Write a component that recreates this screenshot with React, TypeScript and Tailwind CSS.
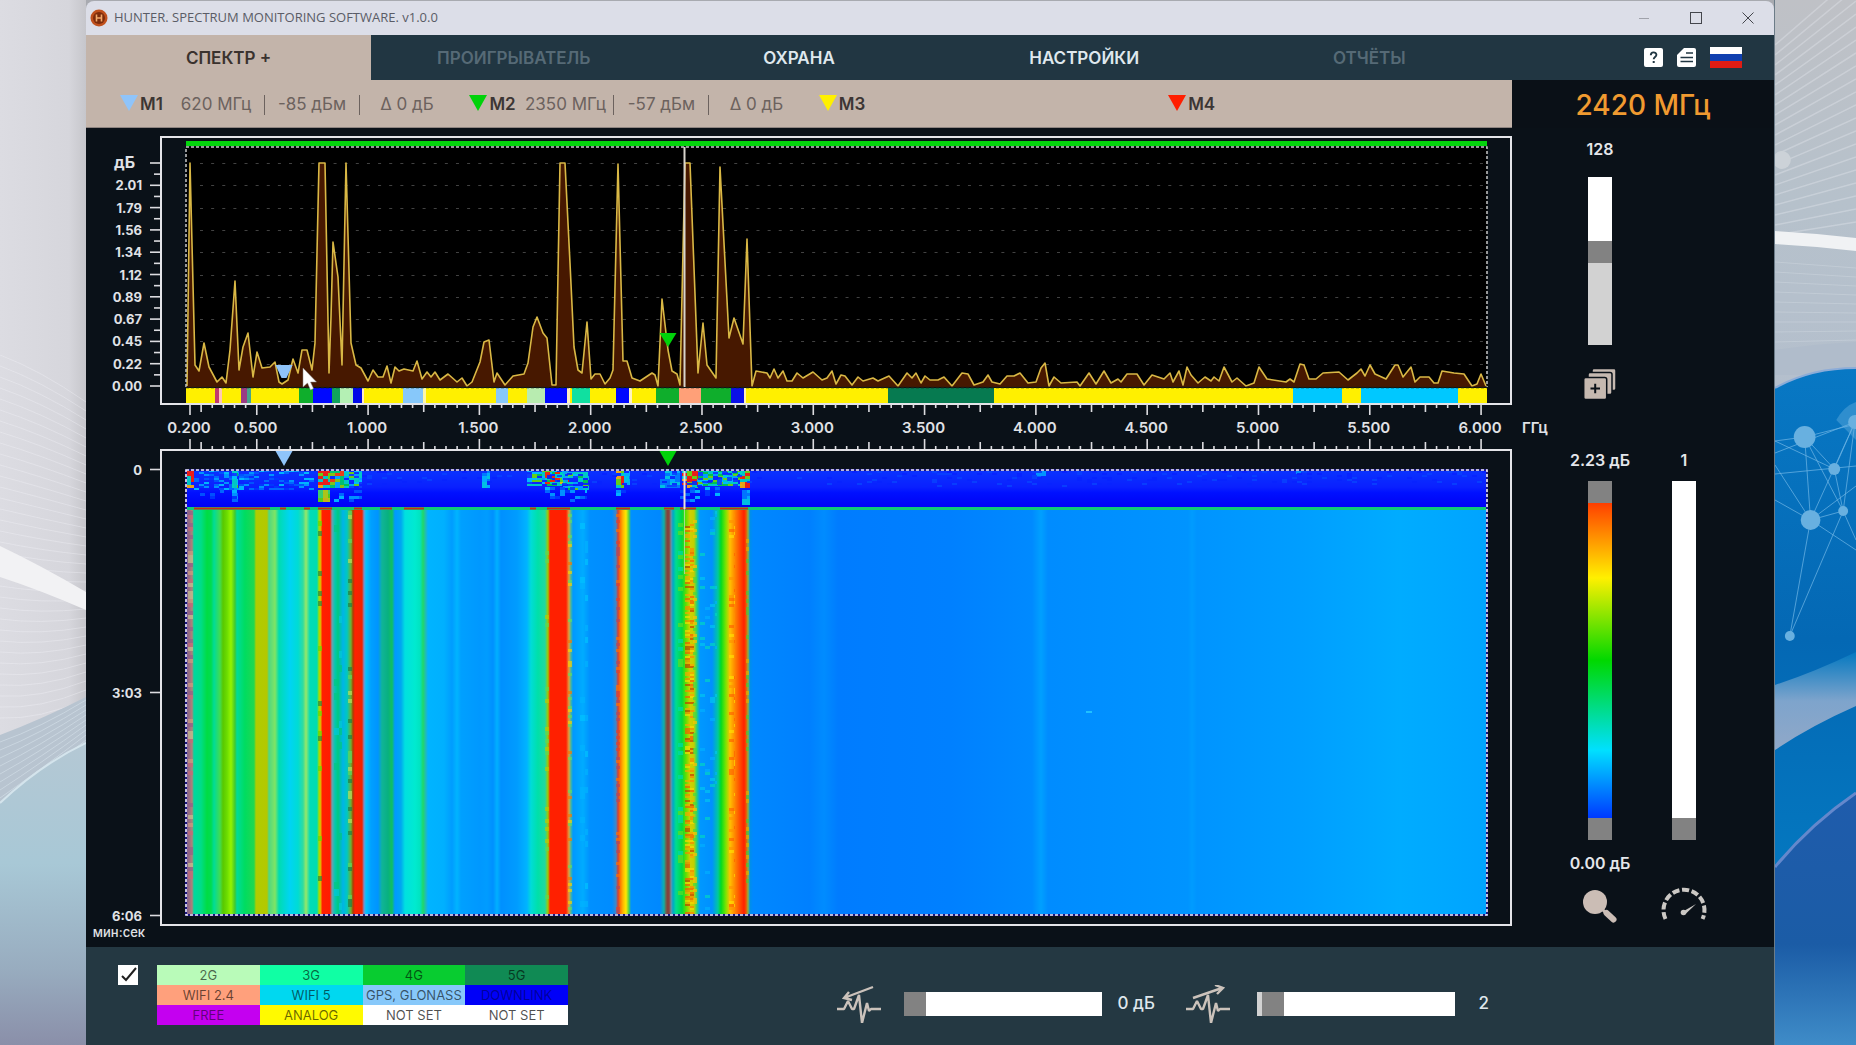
import { useState } from 'react';
import type { ReactNode } from 'react';

const tabs = [
  { id: 'spectrum', title: 'СПЕКТР +', disabled: false },
  { id: 'player', title: 'ПРОИГРЫВАТЕЛЬ', disabled: true },
  { id: 'guard', title: 'ОХРАНА', disabled: false },
  { id: 'settings', title: 'НАСТРОЙКИ', disabled: false },
  { id: 'reports', title: 'ОТЧЁТЫ', disabled: true },
];

const markers = [
  { name: 'M1', color: '#8fc4fa', freq: '620 МГц', level: '-85 дБм', delta: 'Δ 0 дБ' },
  { name: 'M2', color: '#00d20a', freq: '2350 МГц', level: '-57 дБм', delta: 'Δ 0 дБ' },
  { name: 'M3', color: '#fff000', freq: '', level: '', delta: '' },
  { name: 'M4', color: '#ff1e00', freq: '', level: '', delta: '' },
];

const legend = [
  { name: '2G', style: 'bg-[#b9fbb9] text-black/60' },
  { name: '3G', style: 'bg-[#10ffa4] text-black/60' },
  { name: '4G', style: 'bg-[#08cc30] text-black/60' },
  { name: '5G', style: 'bg-[#108a54] text-black/60' },
  { name: 'WIFI 2.4', style: 'bg-[#ffa07c] text-black/60' },
  { name: 'WIFI 5', style: 'bg-[#00d8f0] text-black/60' },
  { name: 'GPS, GLONASS', style: 'bg-[#87c8fa] text-black/60' },
  { name: 'DOWNLINK', style: 'bg-[#0000f8] text-black/40' },
  { name: 'FREE', style: 'bg-[#c400f0] text-black/50' },
  { name: 'ANALOG', style: 'bg-[#fffa00] text-black/60' },
  { name: 'NOT SET', style: 'bg-white text-black/70' },
  { name: 'NOT SET', style: 'bg-white text-black/70' },
];

// spectrum trace, plot coordinates
const trace =
  '187,386 190,163 195,365 199,371 204,343 209,367 217,382 222,377 226,383 230,350 235,281 239,370 243,347 248,333 253,377 257,352 262,368 270,367 275,362 279,382 282,384 288,380 293,359 298,373 302,350 307,350 312,370 315,343 319,163 325,163 329,373 331,317 333,242 338,277 342,365 346,163 351,343 356,365 361,368 368,381 373,370 378,377 383,377 387,366 391,383 395,367 399,371 404,369 413,371 417,361 422,379 427,372 431,377 435,372 440,380 448,374 457,382 462,378 467,386 472,382 480,362 484,342 489,340 494,382 497,373 505,385 513,376 524,374 528,363 533,327 537,317 543,333 547,338 552,385 556,385 560,163 565,163 570,263 574,347 578,370 582,373 587,322 591,379 595,374 600,374 605,384 610,378 613,370 618,164 623,361 627,361 632,378 640,381 652,373 655,375 658,386 662,299 668,350 672,371 677,374 680,385 685,163 690,163 698,373 703,323 707,365 716,378 720,167 729,338 734,318 743,344 747,239 752,386 756,371 767,373 770,378 774,369 778,378 783,371 787,381 792,381 797,373 803,378 813,372 822,380 827,378 832,371 836,384 841,375 845,376 852,385 858,377 863,381 873,378 878,381 889,376 898,386 907,373 912,378 916,373 921,383 925,376 930,380 938,380 944,377 952,386 962,373 968,374 974,385 983,382 988,375 992,382 1000,384 1007,376 1014,376 1020,373 1028,383 1036,382 1041,368 1045,363 1049,386 1054,377 1061,383 1077,382 1080,386 1089,373 1096,384 1104,371 1111,383 1118,379 1121,382 1127,374 1137,374 1144,385 1152,375 1164,379 1170,373 1173,382 1179,371 1183,385 1187,367 1191,375 1198,383 1205,377 1211,381 1214,377 1219,381 1224,367 1232,382 1237,378 1246,386 1254,383 1259,367 1267,379 1286,382 1290,379 1294,382 1300,364 1304,365 1309,379 1316,379 1323,373 1339,372 1348,380 1357,373 1361,369 1365,376 1370,365 1375,374 1386,379 1395,365 1398,365 1403,377 1411,367 1415,382 1420,377 1429,377 1434,383 1438,383 1442,371 1454,373 1464,374 1472,386 1477,384 1481,374 1486,386';

const bands: [number, number, string][] = [
  [215, 219, '#c03a6e'],
  [219, 222, '#ffc8b4'],
  [241, 247, '#9a3c84'],
  [247, 251, '#48a48c'],
  [299, 313, '#0fae2c'],
  [313, 332, '#0008ff'],
  [332, 340, '#10a35c'],
  [340, 353, '#b4f0b4'],
  [353, 362, '#0008e8'],
  [362, 364, '#ffe9c8'],
  [403, 423, '#87c8fa'],
  [423, 426, '#fff7a8'],
  [496, 508, '#87c8fa'],
  [527, 545, '#b8ecb0'],
  [545, 567, '#0008ff'],
  [567, 570, '#fff0c0'],
  [572, 590, '#10e0a0'],
  [616, 629, '#0008ff'],
  [629, 632, '#fff3c0'],
  [656, 679, '#0fae2c'],
  [679, 701, '#ffa078'],
  [701, 731, '#0fae2c'],
  [731, 744, '#0a10e8'],
  [744, 746, '#fff0b0'],
  [888, 994, '#067a50'],
  [1293, 1342, '#00c8ff'],
  [1361, 1458, '#00c8ff'],
];

const waterfall: [number, string][] = [
  [186, '#7a5c90'], [192, '#b08078'], [194, '#00d8a0'], [201, '#00dc88'], [207, '#00dc44'], [211, '#00dc50'],
  [214, '#00dc98'], [220, '#40dc50'], [223, '#58c800'], [227, '#6cdc00'], [231, '#94f400'], [235, '#40c830'],
  [237, '#00dc98'], [245, '#00dc60'], [254, '#20d850'], [256, '#b0cc00'], [267, '#b4c800'], [269, '#50d880'],
  [275, '#80e464'], [279, '#00dcb0'], [290, '#00d4f4'], [298, '#00dcd4'], [303, '#30dca0'], [306, '#98e868'],
  [310, '#00dcb8'], [317, '#00dcb0'], [319, '#a0e000'], [321, '#f0a800'], [322, '#ff2000'], [330, '#ff1c00'],
  [332, '#6ca0b0'], [335, '#00c8b0'], [338, '#00c880'], [343, '#00b4e8'], [347, '#00c8c0'], [351, '#70b030'],
  [353, '#a84000'], [355, '#ff2000'], [362, '#f02400'], [364, '#7890d0'], [366, '#00c4ff'], [371, '#00a0ff'],
  [378, '#0094ff'], [382, '#10b498'], [388, '#08b080'], [392, '#10c060'], [395, '#0098ff'], [401, '#00a8f0'],
  [405, '#00e0e0'], [415, '#00ead0'], [420, '#00e4c0'], [423, '#20d868'], [426, '#20b8c0'], [428, '#00b4ff'],
  [444, '#00b0ff'], [452, '#009cff'], [457, '#00b4ff'], [461, '#00a0ff'], [480, '#0098ff'], [487, '#009cff'],
  [493, '#0090ff'], [497, '#00b0ff'], [501, '#0090ff'], [517, '#009cff'], [527, '#00b4ff'], [531, '#00dcd8'],
  [538, '#00e0a8'], [545, '#20d8a0'], [548, '#a0c800'], [550, '#ff2000'], [566, '#ff2000'], [569, '#e0a040'],
  [571, '#40b8a0'], [573, '#0098ff'], [583, '#00acff'], [590, '#0090ff'], [612, '#008cff'], [616, '#4088c8'],
  [618, '#d04038'], [620, '#ff7000'], [623, '#ffb800'], [626, '#ffe800'], [629, '#50d048'], [631, '#0090ff'],
  [660, '#0088ff'], [664, '#10b0a8'], [666, '#6c6450'], [668, '#883838'], [670, '#806058'], [671, '#6c90a8'],
  [673, '#00a8c8'], [676, '#00dc90'], [682, '#00d840'], [686, '#60e000'], [690, '#d0d000'], [694, '#c0d000'],
  [697, '#20d080'], [700, '#0098ff'], [712, '#0090ff'], [718, '#00c8a0'], [721, '#00dc20'], [726, '#80e400'],
  [730, '#ffc000'], [736, '#ff7800'], [741, '#ff4000'], [744, '#ff2000'], [746, '#f05000'], [748, '#90b040'],
  [750, '#0090e8'], [753, '#0088ff'], [810, '#0080ff'], [824, '#008cff'], [838, '#007cff'], [950, '#0080ff'],
  [1032, '#008aff'], [1041, '#00a0ff'], [1048, '#008cff'], [1188, '#0094ff'], [1192, '#009cff'], [1197, '#0094ff'],
  [1300, '#009eff'], [1400, '#00acff'], [1487, '#00a4ff'],
];

const HOT = ['#ff1e00', '#ff1e00', '#ff1e00', '#ffb000', '#70e000', '#00d8c0'];
const WARM = ['#00d040', '#70e000', '#00d8c0', '#00a8ff', '#00d8c0', '#00c8ff', '#1040ff'];
const COOL = ['#00c4ff', '#00a0ff', '#0070ff', '#0058ff', '#0038ff'];
const CYAN = ['#00b8ff', '#00d0e0', '#0080ff'];

// noisy areas of the waterfall: x, width, y, height, cell height, fill probability, palette
const noisy: [number, number, number, number, number, number, string[]][] = [
  [186, 8, 470, 20, 3, 0.9, HOT],
  [194, 120, 470, 20, 2, 0.5, COOL],
  [232, 6, 470, 20, 3, 0.9, WARM],
  [318, 12, 470, 20, 3, 1, HOT],
  [318, 12, 490, 14, 4, 1, ['#c0d800', '#40e060', '#e0c000', '#60e000']],
  [330, 14, 470, 19, 3, 0.95, ['#ff4000', '#00d060', '#90d000', '#00b0ff']],
  [344, 18, 470, 18, 2, 0.8, WARM],
  [190, 34, 490, 13, 3, 0.25, COOL],
  [232, 6, 490, 13, 3, 0.8, COOL],
  [334, 28, 490, 13, 3, 0.4, COOL],
  [482, 8, 470, 20, 3, 0.8, CYAN],
  [527, 36, 470, 17, 2, 0.85, WARM],
  [545, 24, 472, 12, 2, 0.5, HOT],
  [563, 26, 470, 20, 2, 0.7, WARM],
  [545, 42, 487, 17, 3, 0.4, COOL],
  [616, 8, 470, 20, 3, 0.9, HOT],
  [624, 6, 470, 20, 3, 0.7, CYAN],
  [616, 12, 490, 12, 3, 0.5, COOL],
  [660, 20, 470, 20, 3, 0.8, CYAN],
  [682, 16, 470, 18, 3, 0.95, HOT],
  [698, 44, 470, 17, 2, 0.85, WARM],
  [740, 10, 470, 20, 3, 0.9, HOT],
  [680, 40, 487, 15, 3, 0.5, COOL],
  [742, 8, 490, 16, 3, 0.9, CYAN],
  [1036, 10, 470, 9, 3, 0.8, ['#00a0ff', '#0060ff']],
  [1296, 10, 470, 4, 2, 0.8, ['#0090ff', '#0060ff']],
  [362, 1124, 471, 16, 2, 0.12, ['#0840ff', '#0824ff']],
  [188, 5, 511, 403, 4, 0.5, ['#c86878', '#d0a080', '#906088', '#c8c890']],
  [318, 4, 511, 403, 5, 0.12, ['#208040', '#60d800']],
  [348, 4, 511, 403, 4, 0.25, ['#60d860', '#207840', '#c0e060']],
  [334, 8, 511, 403, 7, 0.12, ['#00c880', '#00c8e0']],
  [568, 4, 511, 403, 3, 0.25, ['#ffd000', '#60e060', '#ff7000']],
  [545, 4, 511, 403, 4, 0.25, ['#c0c800', '#60d850']],
  [580, 8, 511, 403, 6, 0.2, ['#00c4ff', '#00b4ff']],
  [616, 4, 511, 403, 3, 0.4, ['#e04030', '#ff7000', '#b04860']],
  [685, 9, 524, 390, 2, 0.55, ['#ff5000', '#c83000', '#ffa000', '#ffd800', '#ff8000']],
  [693, 4, 511, 403, 3, 0.35, ['#ffc000', '#40d840']],
  [678, 5, 511, 403, 4, 0.25, ['#00d8b0', '#60e020']],
  [700, 17, 511, 403, 3, 0.08, ['#00c8f0', '#00b0ff', '#00d8c0']],
  [729, 6, 511, 403, 3, 0.3, ['#ff9000', '#ffe000', '#ff6000']],
  [746, 3, 511, 403, 4, 0.3, ['#e0b000', '#40c840']],
];

function random(seed: number) {
  let s = seed;
  return () => {
    s = (s * 1664525 + 1013904223) % 4294967296;
    return s / 4294967296;
  };
}

function noiseCells() {
  const rnd = random(42);
  const cells: { x: number; y: number; w: number; h: number; c: string }[] = [];
  noisy.forEach(([x, w, y, h, step, chance, palette]) => {
    for (let cy = y; cy + step <= y + h; cy += step) {
      for (let cx = x; cx < x + w; cx += 5) {
        if (rnd() > chance) continue;
        cells.push({ x: cx, y: cy, w: Math.min(5, x + w - cx), h: step, c: palette[Math.floor(rnd() * palette.length)] });
      }
    }
  });
  return cells;
}

const cells = noiseCells();

const freqX = (ghz: number) => 190 + (ghz - 0.2) * 222.6;
const freqTicks = Array.from({ length: 117 }, (_, i) => 4 + i);
const freqLabels = [0.2, 0.5, 1, 1.5, 2, 2.5, 3, 3.5, 4, 4.5, 5, 5.5, 6];
const levelLabels = ['дБ', '2.01', '1.79', '1.56', '1.34', '1.12', '0.89', '0.67', '0.45', '0.22', '0.00'];
const levelY = (i: number) => 163 + i * 22.3;

function tickLength(i: number) {
  if (i === 4 || i % 10 === 0) return 11;
  return i % 5 === 0 ? 8 : 4;
}

function Pin({ x, y, color }: { x: number; y: number; color: string }) {
  return <path d={`M${x - 8.5} ${y}h17l-8.5 15z`} fill={color} />;
}

function Charts() {
  return (
    <svg viewBox="86 128 1426 819" className="block w-full overflow-visible" role="img" aria-label="Спектр и водопад">
      <defs>
        <linearGradient id="waterfall" gradientUnits="userSpaceOnUse" x1="186" y1="0" x2="1487" y2="0">
          {waterfall.map(([x, color]) => (
            <stop key={x} offset={(x - 186) / 1301} stopColor={color} />
          ))}
        </linearGradient>
        <linearGradient id="recent" x1="0" y1="0" x2="0" y2="1">
          <stop offset="0" stopColor="#0a34ff" />
          <stop offset="0.45" stopColor="#0a20ff" />
          <stop offset="0.6" stopColor="#0010ff" />
          <stop offset="1" stopColor="#0000f4" />
        </linearGradient>
      </defs>

      {/* Spectrum */}
      <rect x="161" y="137" width="1350" height="267" fill="none" stroke="#e4e4e8" strokeWidth="2" />
      <rect x="186" y="141" width="1301" height="5" fill="#04d40c" />
      <rect x="186" y="147" width="1301" height="240" fill="#000" />
      {levelLabels.slice(0, 10).map((label, i) => (
        <path
          key={label}
          d={`M200 ${Math.round(levelY(i)) + 0.5}H1486`}
          stroke="#424242"
          strokeWidth="1"
          strokeDasharray="3 8.13"
        />
      ))}
      <polygon points={`187,387 ${trace} 1486,387`} fill="#471800" />
      <polyline points={trace} fill="none" stroke="#d9b845" strokeWidth="1.6" strokeLinejoin="round" />
      <path d="M684.5 147V387" stroke="#d8d4cc" strokeWidth="2" />
      <path d="M186 387V147H1487V387" fill="none" stroke="#c8c8c8" strokeWidth="1.5" strokeDasharray="3 2" />
      <rect x="186" y="388" width="1301" height="15" fill="#fff000" />
      {bands.map(([from, to, color]) => (
        <rect key={from} x={from} y="388" width={to - from} height="15" fill={color} />
      ))}
      <path d="M186 387.5H1487" stroke="#1c1c10" strokeWidth="1.5" strokeDasharray="3 2" />
      <path d="M275.5 365h17l-6 13h-5z" fill="#8fc4fa" />
      <path d="M659.5 333h17l-8.5 14z" fill="#00d20a" />

      {levelLabels.map((label, i) => (
        <g key={label}>
          <path d={`M150 ${levelY(i)}h10`} stroke="#dcdce0" strokeWidth="1.6" />
          {i < 10 && <path d={`M154 ${levelY(i) + 11.15}h6`} stroke="#dcdce0" strokeWidth="1.6" />}
          <text
            x={i === 0 ? 135 : 142}
            y={levelY(i) + 5}
            textAnchor="end"
            className={i === 0 ? 'fill-[#e0e2e6] text-[16px] font-bold' : 'fill-[#e0e2e6] text-[13px] font-bold'}
          >
            {label}
          </text>
        </g>
      ))}

      {/* Frequency axis */}
      {freqTicks.map(i => (
        <path
          key={i}
          d={`M${freqX(i / 20)} 404v${tickLength(i)}M${freqX(i / 20)} 450v-${tickLength(i)}`}
          stroke="#dcdce0"
          strokeWidth="1.6"
        />
      ))}
      {freqLabels.map(f => (
        <text key={f} x={freqX(f) - 1} y="433" textAnchor="middle" className="fill-[#e0e2e6] text-[15px] font-semibold">
          {f.toFixed(3)}
        </text>
      ))}
      <text x="1522" y="433" className="fill-[#e0e2e6] text-[15px] font-semibold">
        ГГц
      </text>

      {/* Waterfall */}
      <rect x="161" y="450" width="1350" height="475" fill="none" stroke="#e4e4e8" strokeWidth="2" />
      <rect x="186" y="470" width="1301" height="38" fill="url(#recent)" />
      <rect x="186" y="510" width="1301" height="405" fill="url(#waterfall)" />
      {cells.map((cell, i) => (
        <rect
          key={i}
          x={cell.x}
          y={cell.y}
          width={cell.w}
          height={cell.h}
          fill={cell.c}
          opacity={cell.y < 508 ? 0.9 : 0.65}
        />
      ))}
      <path d="M186 508.5H1487" stroke="#10c878" strokeWidth="3" />
      <path
        d="M194 508.5H270M280 508.5h6M304 508.5h6M318 508.5H332M354 508.5H362M380 508.5h12M404 508.5H424M530 508.5h6M547 508.5H570M616 508.5h14M664 508.5h10M680 508.5H696M720 508.5H748"
        stroke="#c43018"
        strokeWidth="2"
      />
      <path d="M684.5 470V509" stroke="#e8e0d8" strokeWidth="2" />
      <path d="M684.5 509V574" stroke="#e8e0d8" strokeOpacity="0.6" />
      <path d="M1086 712h6" stroke="#20c0ff" strokeWidth="2" />
      <rect x="186" y="470" width="1301" height="445" fill="none" stroke="#1a1480" strokeWidth="2" />
      <rect x="186" y="470" width="1301" height="445" fill="none" stroke="#f0eef8" strokeWidth="1.6" strokeDasharray="3 2" />
      <Pin x={284} y={451} color="#8fc4fa" />
      <Pin x={668} y={451} color="#00d20a" />
      {['0', '3:03', '6:06'].map((label, i) => (
        <g key={label}>
          <path d={`M150 ${469.5 + i * 223}h10`} stroke="#dcdce0" strokeWidth="1.6" />
          <text x="142" y={474.5 + i * 223} textAnchor="end" className="fill-[#e0e2e6] text-[13px] font-bold">
            {label}
          </text>
        </g>
      ))}
      <text x="145" y="937" textAnchor="end" className="fill-[#e0e2e6] text-[13px] font-medium">
        мин:сек
      </text>

      {/* Pointer */}
      <path d="M303 368v19l4.5-4 3 7 3-1.5-3-6.500h6z" fill="#fff" stroke="#888" strokeWidth="0.5" />
    </svg>
  );
}

function LeftWallpaper() {
  return (
    <svg viewBox="0 0 86 1045" preserveAspectRatio="none" className="absolute inset-0 h-full w-full" aria-hidden="true">
      <defs>
        <linearGradient id="lTop" x1="0" y1="0" x2="1" y2="0">
          <stop offset="0" stopColor="#dcdce2" />
          <stop offset="0.8" stopColor="#d6d6dc" />
          <stop offset="1" stopColor="#c6c6cb" />
        </linearGradient>
        <linearGradient id="lBottom" x1="0" y1="0" x2="0" y2="1">
          <stop offset="0" stopColor="#b4c8d4" />
          <stop offset="0.4" stopColor="#a8c8d6" />
          <stop offset="0.75" stopColor="#98acbf" />
          <stop offset="1" stopColor="#8a8fa9" />
        </linearGradient>
      </defs>
      <rect width="86" height="1045" fill="url(#lTop)" />
      {Array.from({ length: 34 }, (_, i) => (
        <path
          key={i}
          d={`M0 ${355 + i * 11}Q40 ${370 + i * 10.6} 86 ${402 + i * 9}`}
          stroke="#f4f4f8"
          strokeOpacity="0.35"
          fill="none"
        />
      ))}
      <path d="M0 546Q40 565 86 592V610Q40 590 0 577z" fill="#f2f2f4" />
      <path d="M0 735Q40 720 86 697V1045H0z" fill="#b8c4d0" />
      {Array.from({ length: 9 }, (_, i) => (
        <path key={i} d={`M0 ${742 + i * 8}Q40 ${728 + i * 6} 86 ${700 + i * 5}`} stroke="#dce8f0" strokeOpacity="0.5" fill="none" />
      ))}
      <path d="M0 803Q40 765 86 743V1045H0z" fill="url(#lBottom)" />
      <path d="M0 803Q40 765 86 743" stroke="#d4e4ec" strokeWidth="2" fill="none" />
    </svg>
  );
}

const nodes = [
  [30, 437, 11],
  [60, 469, 6],
  [69, 511, 5],
  [36, 520, 10],
  [15, 636, 5],
  [81, 422, 7],
];

function RightWallpaper() {
  return (
    <svg viewBox="0 0 82 1045" preserveAspectRatio="none" className="absolute inset-0 h-full w-full" aria-hidden="true">
      <defs>
        <linearGradient id="rTop" x1="0" y1="0" x2="0" y2="1">
          <stop offset="0" stopColor="#bfc1c6" />
          <stop offset="0.5" stopColor="#b6c1cb" />
          <stop offset="1" stopColor="#b4bfcd" />
        </linearGradient>
        <linearGradient id="rBlue" x1="0" y1="0" x2="0" y2="1">
          <stop offset="0" stopColor="#0878c4" />
          <stop offset="0.4" stopColor="#0468b4" />
          <stop offset="0.75" stopColor="#0478c0" />
          <stop offset="1" stopColor="#2c88c8" />
        </linearGradient>
        <linearGradient id="rDeep" x1="0" y1="0" x2="0" y2="1">
          <stop offset="0" stopColor="#1f5cac" />
          <stop offset="0.6" stopColor="#1b5ca6" />
          <stop offset="1" stopColor="#3f8cc8" />
        </linearGradient>
        <linearGradient id="rBand" x1="0" y1="0" x2="0" y2="1">
          <stop offset="0" stopColor="#0478c0" />
          <stop offset="0.5" stopColor="#7ea4cc" />
          <stop offset="1" stopColor="#90a8c8" />
        </linearGradient>
      </defs>
      <rect width="82" height="400" fill="url(#rTop)" />
      {Array.from({ length: 20 }, (_, i) => (
        <path key={i} d={`M0 ${45 + i * 10}L82 ${-25 + i * 13}`} stroke="#e8ecf0" strokeOpacity="0.35" strokeWidth="1.5" />
      ))}
      <circle cx="7" cy="160" r="9" fill="#ccd2d8" />
      <path d="M0 231Q40 233 82 238V251Q40 246 0 244z" fill="#f0f2f4" />
      {Array.from({ length: 9 }, (_, i) => (
        <path key={i} d={`M0 ${262 + i * 10}L82 ${268 + i * 9}`} stroke="#d4dce4" strokeOpacity="0.4" />
      ))}
      <path d="M0 350Q40 344 82 342V375H0z" fill="#b0bccb" />
      <path d="M0 388Q36 368 82 368V1045H0z" fill="url(#rBlue)" />
      <path d="M0 388Q36 368 82 368" stroke="#8cacd8" strokeWidth="2" fill="none" />
      <path d="M62 420Q70 406 82 402V440z" fill="#6cb4e0" opacity="0.4" />
      <path
        d="M0 441L30 437 82 424M0 453L81 422M30 437L60 469 81 422 36 520 30 437M0 474L82 466M30 437L69 511 36 520 0 465M36 520L15 636 69 511 60 469 0 441M36 520L82 486M69 511L81 422M69 511L82 540M36 520L82 550M0 500L36 520"
        stroke="#6cb4e4"
        strokeOpacity="0.75"
        fill="none"
      />
      {nodes.map(([cx, cy, r]) => (
        <circle key={cy} cx={cx} cy={cy} r={r} fill="#68b0e0" />
      ))}
      <path d="M0 685Q40 672 82 652V706Q36 726 0 750z" fill="url(#rBand)" />
      <path d="M0 867Q36 824 82 793V1045H0z" fill="url(#rDeep)" />
      <path d="M0 867Q36 824 82 793" stroke="#6488cc" strokeWidth="3" fill="none" />
    </svg>
  );
}

function TitleBar() {
  return (
    <header className="flex h-[34px] items-center justify-between rounded-t-lg bg-[#dcdee8] pr-5 pl-1">
      <div className="flex items-center gap-1.5">
        <svg viewBox="0 0 18 20" className="h-5 w-[18px]" aria-hidden="true">
          <circle cx="9" cy="10" r="8.5" fill="#c0501c" />
          <circle cx="9" cy="10" r="6" fill="#7c2c0c" />
          <path d="M6.5 6.500v7M11.5 6.500v7M6.500 10h5" stroke="#f4a868" strokeWidth="1.6" />
        </svg>
        <h1 className="font-['Open_Sans','Noto_Sans',sans-serif] text-[13px] text-[#5a5c66]">
          HUNTER. SPECTRUM MONITORING SOFTWARE. v1.0.0
        </h1>
      </div>
      <div className="flex items-center gap-10 text-[#44464c]">
        <button aria-label="Свернуть" className="text-[#a0a2aa]">
          <svg viewBox="0 0 12 12" className="size-3" fill="none" stroke="currentColor">
            <path d="M1 6.500h10" />
          </svg>
        </button>
        <button aria-label="Развернуть">
          <svg viewBox="0 0 12 12" className="size-3" fill="none" stroke="currentColor">
            <rect x="0.5" y="0.5" width="11" height="11" />
          </svg>
        </button>
        <button aria-label="Закрыть">
          <svg viewBox="0 0 12 12" className="size-3" fill="none" stroke="currentColor">
            <path d="M0.5 0.500l11 11M11.500 0.500l-11 11" />
          </svg>
        </button>
      </div>
    </header>
  );
}

function Toolbar() {
  return (
    <div className="flex items-center justify-end gap-3.5 pr-8">
      <button aria-label="Справка">
        <svg viewBox="0 0 19 19" className="size-[19px]">
          <rect width="19" height="19" rx="2" fill="#fff" />
          <path d="M6.8 7.200c0-3.800 5.600-3.600 5.600-0.400 0 2.200-2.700 2.200-2.700 4.400" fill="none" stroke="#203642" strokeWidth="1.9" />
          <rect x="8.7" y="13" width="2" height="2" fill="#203642" />
        </svg>
      </button>
      <button aria-label="Журнал">
        <svg viewBox="0 0 19 19" className="size-[19px]">
          <path d="M7 0h10a2 2 0 0 1 2 2v15a2 2 0 0 1-2 2H2a2 2 0 0 1-2-2V7z" fill="#fff" />
          <path d="M9 5h7M3.500 9.500H16M3.500 13.500H16" stroke="#203642" strokeWidth="1.6" />
        </svg>
      </button>
      <button aria-label="Язык: русский" className="flex h-[21px] w-8 flex-col">
        <span className="w-full flex-1 bg-white" />
        <span className="w-full flex-1 bg-[#1040b0]" />
        <span className="w-full flex-1 bg-[#e01c14]" />
      </button>
    </div>
  );
}

function MarkerBar() {
  return (
    <div className="grid grid-cols-[repeat(4,25.1%)] items-center overflow-hidden border-b border-[#8e8480] bg-[#c3b4aa] pt-0.5 pl-[34px]">
      {markers.map(m => (
        <div key={m.name} className="flex items-center text-[17px] whitespace-nowrap text-[#6c625e]">
          <svg viewBox="0 0 18 16" className="-mt-1 h-4 w-[18px]" aria-hidden="true">
            <path d="M0 0h18L9 16z" fill={m.color} />
          </svg>
          <span className="w-[30px] pl-0.5 font-semibold text-[#3c3634]">{m.name}</span>
          {m.freq && (
            <>
              <span className="w-24 text-center">{m.freq}</span>
              <span className="h-5 w-px bg-[#6c625e]" />
              <span className="w-[94px] text-center">{m.level}</span>
              <span className="h-5 w-px bg-[#6c625e]" />
              <span className="w-[94px] text-center">{m.delta}</span>
            </>
          )}
        </div>
      ))}
    </div>
  );
}

const verticalThumb =
  '[writing-mode:vertical-lr] [direction:rtl] appearance-none [&::-webkit-slider-thumb]:appearance-none [&::-webkit-slider-thumb]:h-[22px] [&::-webkit-slider-thumb]:w-6 [&::-webkit-slider-thumb]:rounded-none [&::-webkit-slider-thumb]:bg-[#828282]';

function SidePanel() {
  const [average, setAverage] = useState(128);
  const [high, setHigh] = useState(223);
  const [low, setLow] = useState(0);
  const [speed, setSpeed] = useState(1);

  return (
    <aside className="flex flex-col pl-[46px] text-base leading-6 font-semibold text-[#e4e6ea]">
      <div className="flex w-[84px] flex-col items-center pt-[9px]">
        <label htmlFor="average">{average}</label>
        <input
          id="average"
          type="range"
          min={0}
          max={227}
          value={average}
          onChange={e => setAverage(Number(e.target.value))}
          className={`${verticalThumb} mt-4 h-[168px] w-6 bg-[linear-gradient(to_top,#d2d2d2_55%,#fff_55%)]`}
        />
        <button aria-label="Добавить слой" className="mt-[23px]">
          <svg viewBox="0 0 34 32" className="h-8 w-[34px]" fill="#c6b9b0" stroke="#0a1118" strokeWidth="1.5">
            <rect x="9" y="0.5" width="24" height="22" rx="2" />
            <rect x="5" y="4.5" width="24" height="22" rx="2" />
            <rect x="0.7" y="9.5" width="23" height="22" rx="2" />
            <path d="M7.500 20.500h9.500M12.200 15.700v9.600" strokeWidth="2" />
          </svg>
        </button>
      </div>

      <div className="mt-12 flex">
        <div className="flex w-[84px] flex-col items-center">
          <label htmlFor="high">{(high / 100).toFixed(2)} дБ</label>
          <div className="relative mt-[9px] h-[359px] w-6 bg-[linear-gradient(to_bottom,#ff3c00_6%,#ff5000_8%,#fff000_27%,#00d800_50%,#00e0ff_75%,#0038ff_94%)]">
            <input
              id="high"
              type="range"
              min={0}
              max={223}
              value={high}
              onChange={e => setHigh(Number(e.target.value))}
              className={`${verticalThumb} block h-full w-6 bg-transparent`}
            />
            <input
              id="low"
              type="range"
              min={0}
              max={223}
              value={low}
              onChange={e => setLow(Number(e.target.value))}
              className={`${verticalThumb} pointer-events-none absolute inset-0 h-full w-6 bg-transparent [&::-webkit-slider-thumb]:pointer-events-auto`}
            />
          </div>
          <label htmlFor="low" className="mt-[11px] whitespace-nowrap">
            {(low / 100).toFixed(2)} дБ
          </label>
          <button aria-label="Масштаб" className="mt-3.5">
            <svg viewBox="0 0 34 34" className="size-[34px]">
              <circle cx="12" cy="13" r="12" fill="#cbbdb5" />
              <path d="M20 21l3 3" stroke="#cbbdb5" strokeWidth="3" />
              <path d="M23.500 24l7 6.500" stroke="#cbbdb5" strokeWidth="6" strokeLinecap="round" />
            </svg>
          </button>
        </div>
        <div className="flex w-[84px] flex-col items-center">
          <label htmlFor="speed">{speed}</label>
          <input
            id="speed"
            type="range"
            min={1}
            max={10}
            value={speed}
            onChange={e => setSpeed(Number(e.target.value))}
            className={`${verticalThumb} mt-[9px] h-[359px] w-6 bg-white`}
          />
          <button aria-label="Скорость" className="mt-[46px]">
            <svg viewBox="0 0 46 36" className="h-9 w-[46px]" fill="none">
              <path d="M4.500 33A20.500 20.500 0 1 1 41.500 33" stroke="#cbc8c4" strokeWidth="4" strokeDasharray="7.200 2.600" />
              <path d="M22 25.500l13-7.500-10.500 10z" fill="#cbc8c4" />
              <circle cx="22.5" cy="26.5" r="2.8" fill="#cbc8c4" />
            </svg>
          </button>
        </div>
      </div>
    </aside>
  );
}

function PulseIcon({ children }: { children: ReactNode }) {
  return (
    <svg viewBox="0 0 44 38" className="h-[38px] w-11" fill="none" stroke="#cbc2bb" strokeWidth="2.4" aria-hidden="true">
      <path d="M0 24h7l4-8 4 8h2l5-14 3 28 5-20 2 8 2-2h10" strokeLinejoin="bevel" />
      {children}
    </svg>
  );
}

const horizontalThumb =
  'appearance-none h-6 w-[198px] [&::-webkit-slider-thumb]:appearance-none [&::-webkit-slider-thumb]:h-6 [&::-webkit-slider-thumb]:w-[22px] [&::-webkit-slider-thumb]:rounded-none [&::-webkit-slider-thumb]:bg-[#828282]';

function BottomBar() {
  const [shown, setShown] = useState(true);
  const [attenuation, setAttenuation] = useState(0);
  const [gain, setGain] = useState(2);

  return (
    <footer className="flex flex-1 items-start bg-[#243842] pt-[18px] pl-8">
      <label className="relative mr-[19px] block size-5">
        <input
          type="checkbox"
          checked={shown}
          onChange={e => setShown(e.target.checked)}
          aria-label="Показать диапазоны"
          className="block size-5 appearance-none bg-white"
        />
        {shown && (
          <svg viewBox="0 0 20 20" className="pointer-events-none absolute inset-0 size-5" fill="none" stroke="#202020" strokeWidth="2">
            <path d="M4 11l4 4L18 3" />
          </svg>
        )}
      </label>
      <ul className="grid w-[411px] grid-cols-4 text-center text-[13px] leading-5">
        {legend.map((item, i) => (
          <li key={i} className={`whitespace-nowrap ${item.style}`}>
            {item.name}
          </li>
        ))}
      </ul>
      <div className="mt-5 ml-auto flex items-center pr-[285px] text-[17px] font-medium text-[#dfe7ec]">
        <PulseIcon>
          <path d="M36 2L7 13M12 7l-5 6 8 2" />
        </PulseIcon>
        <input
          id="attenuation"
          type="range"
          min={0}
          max={60}
          value={attenuation}
          onChange={e => setAttenuation(Number(e.target.value))}
          className={`${horizontalThumb} ml-[23px] bg-white`}
        />
        <label htmlFor="attenuation" className="ml-4 w-[68px]">
          {attenuation} дБ
        </label>
        <PulseIcon>
          <path d="M7 13L36 3M29 0l8 3-6 6" />
        </PulseIcon>
        <input
          id="gain"
          type="range"
          min={0}
          max={59}
          value={gain}
          onChange={e => setGain(Number(e.target.value))}
          className={`${horizontalThumb} ml-[27px] bg-[linear-gradient(to_right,#d2d2d2_8%,#fff_8%)]`}
        />
        <label htmlFor="gain" className="ml-6">
          {gain}
        </label>
      </div>
    </footer>
  );
}

export default function App() {
  const [activeTab, setActiveTab] = useState('spectrum');

  return (
    <div className="flex min-h-screen bg-[#a8aab0] font-[Inter,'Liberation_Sans',sans-serif]">
      <div className="relative w-[86px] shrink-0">
        <LeftWallpaper />
      </div>

      <main className="flex min-w-0 flex-1 flex-col pt-px">
        <TitleBar />

        <div className="grid h-[45px] grid-cols-[1fr_262px] bg-[#213642]">
          <nav className="grid grid-cols-5">
            {tabs.map(tab => (
              <button
                key={tab.id}
                disabled={tab.disabled}
                onClick={() => setActiveTab(tab.id)}
                className={`pt-0.5 text-[17px] font-semibold ${
                  tab.id === activeTab
                    ? 'bg-[#c3b4aa] text-[#3a322e]'
                    : tab.disabled
                    ? 'text-[#566a76]'
                    : 'text-[#dfe8ee]'
                }`}
              >
                {tab.title}
              </button>
            ))}
          </nav>
          <Toolbar />
        </div>

        <div className="grid h-12 grid-cols-[1fr_262px] bg-[#0a1017]">
          <MarkerBar />
          <output className="flex items-center justify-center pt-0.5 text-[28px] font-medium text-[#f09a30]">
            2420 МГц
          </output>
        </div>

        <div className="grid grid-cols-[1fr_262px] bg-[#0a1118]">
          <Charts />
          <SidePanel />
        </div>

        <BottomBar />
      </main>

      <div className="relative w-[82px] shrink-0 border-l border-[#6c7c88]">
        <RightWallpaper />
      </div>
    </div>
  );
}
